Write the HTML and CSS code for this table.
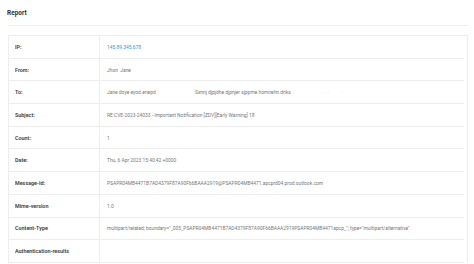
FILE: index.html
```html
<!DOCTYPE html>
<html>
<head>
<meta charset="utf-8">
<link rel="stylesheet" href="styles.css">
</head>
<body>
<div class="page">
  <div class="header"><span class="title">Report</span></div>
  <div class="wrap">
    <div class="table">
      <div class="row"><div class="label">IP:</div><div class="value link">145.89.345.678</div></div>
      <div class="row"><div class="label">From:</div><div class="value">Jhon&nbsp;&nbsp;Jane</div></div>
      <div class="row"><div class="label">To:</div><div class="value"><span class="to1">Jane doye eyod.eriepd</span><span class="to2">Sxnnj djpjdhe djpnjer sjppme homirehn.dnks</span><span class="faint">- - -</span><span class="faint dash">-</span></div></div>
      <div class="row"><div class="label">Subject:</div><div class="value">RE:CVE-2023-24033 --Important Notification [ZDV][Early Warning] 18</div></div>
      <div class="row"><div class="label">Count:</div><div class="value">1</div></div>
      <div class="row"><div class="label">Date:</div><div class="value">Thu, 6 Apr 2023 15:40:42 +0000</div></div>
      <div class="row"><div class="label">Message-Id:</div><div class="value">PSAPR04MB4471B7AD4379F87A90F66BAAA2919@PSAPR04MB4471.apcprd04.prod.outlook.com</div></div>
      <div class="row"><div class="label">Mime-version</div><div class="value">1.0</div></div>
      <div class="row"><div class="label">Content-Type</div><div class="value">multipart/related; boundary="_005_PSAPR04MB4471B7AD4379F87A90F66BAAA2919PSAPR04MB4471apcp_"; type="multipart/alternative"</div></div>
      <div class="row"><div class="label">Authentication-results</div><div class="value"></div></div>
    </div>
  </div>
</div>
</body>
</html>
```
FILE: styles.css
```css
html, body {
  margin: 0;
  padding: 0;
  background: #fff;
}
body {
  font-family: Roboto, "Noto Sans", "Liberation Sans", sans-serif;
  color: #555;
  width: 474px;
  height: 264px;
  overflow: hidden;
}
.page {
  padding: 0 6px 0 8px;
}
.header {
  height: 25px;
  display: flex;
  align-items: center;
  border-bottom: 1px solid #f0f0f0;
}
.title {
  font-size: 6.5px;
  font-weight: 700;
  color: #333;
  margin-left: -1px;
}
.wrap {
  margin-top: 9px;
  border: 1px solid #eee;
  border-bottom: none;
  padding-right: 3px;
}
.table {
  display: flex;
  flex-direction: column;
}
.row {
  display: grid;
  grid-template-columns: 91px 1fr;
  height: 22.7px;
  border-bottom: 1px solid #eee;
  box-sizing: border-box;
}
.label {
  display: flex;
  align-items: center;
  padding-left: 6px;
  font-size: 5.4px;
  font-weight: 600;
  color: #3a3a3a;
  border-right: 1px solid #eee;
}
.value {
  display: flex;
  align-items: center;
  padding-left: 7px;
  font-size: 4.9px;
  color: #777;
  white-space: nowrap;
}
.link {
  color: #3d8fd8;
}
.to1 {
  width: 88px;
}
.to2 {
  width: 128px;
}
.faint {
  color: #e4e4e4;
}
.dash {
  margin-left: 12px;
}
```
